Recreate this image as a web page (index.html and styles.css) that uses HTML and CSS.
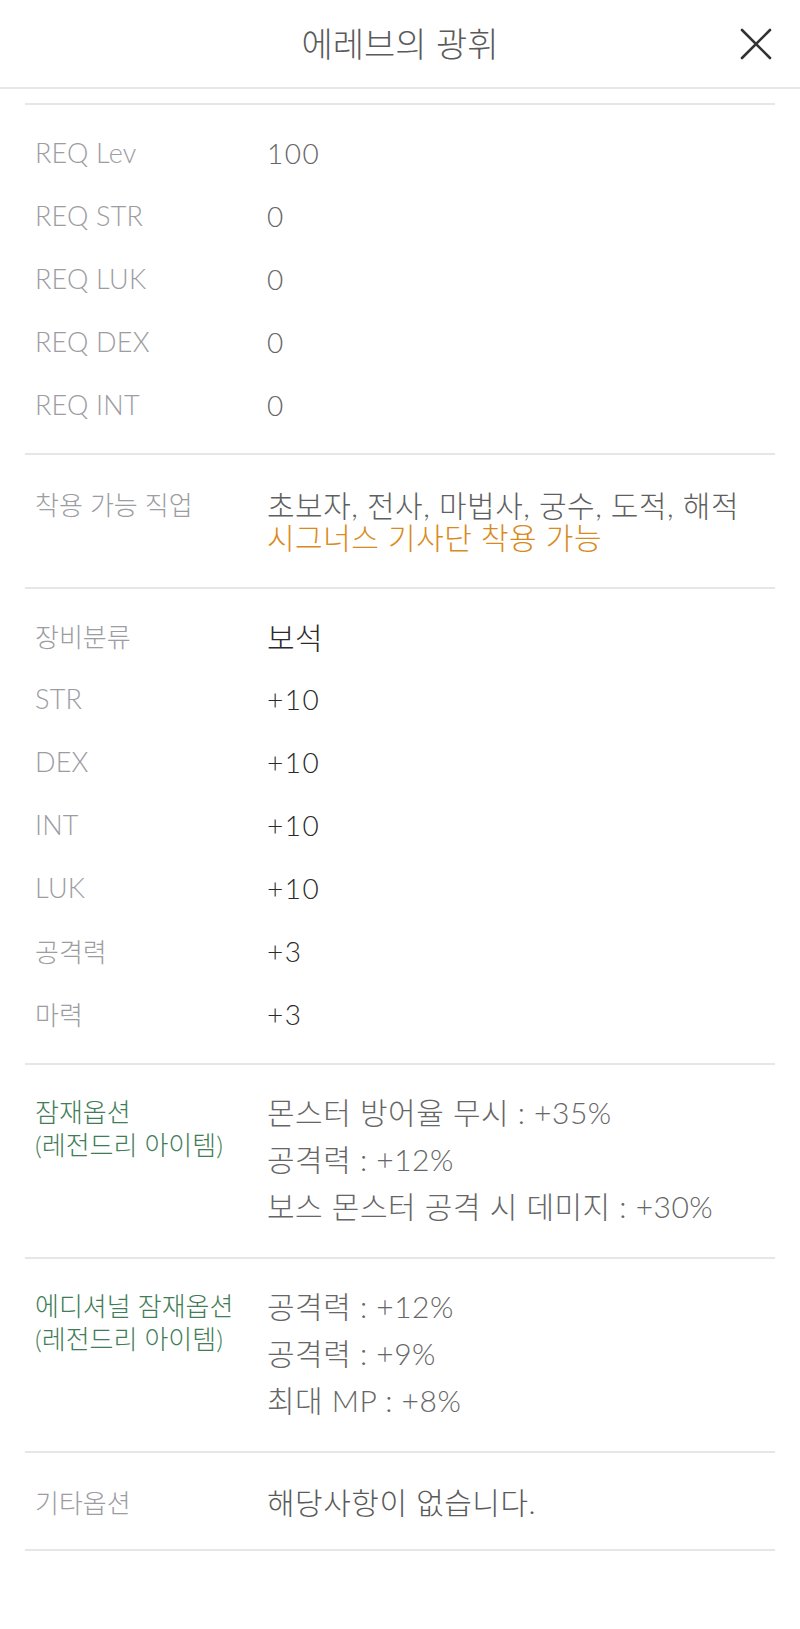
FILE: index.html
```html
<!DOCTYPE html>
<html lang="ko">
<head>
<meta charset="utf-8">
<title>에레브의 광휘</title>
<link rel="stylesheet" href="styles.css">
</head>
<body>
<header class="topbar">
  <span class="spacer"></span>
  <h1 class="title">에레브의 광휘</h1>
  <button class="close" aria-label="닫기">
    <svg width="32" height="32" viewBox="0 0 32 32"><path d="M2 2 L30 30 M30 2 L2 30" stroke="#333" stroke-width="2.6" fill="none" stroke-linecap="round"/></svg>
  </button>
</header>
<main class="content">
  <section class="group group-req">
    <div class="row"><span class="label lat">REQ Lev</span><span class="value lat">100</span></div>
    <div class="row"><span class="label lat">REQ STR</span><span class="value lat">0</span></div>
    <div class="row"><span class="label lat">REQ LUK</span><span class="value lat">0</span></div>
    <div class="row"><span class="label lat">REQ DEX</span><span class="value lat">0</span></div>
    <div class="row"><span class="label lat">REQ INT</span><span class="value lat">0</span></div>
  </section>
  <section class="group group-job">
    <div class="row row-multi">
      <span class="label">착용 가능 직업</span>
      <div class="value">
        <div>초보자, 전사, 마법사, 궁수, 도적, 해적</div>
        <div class="orange">시그너스 기사단 착용 가능</div>
      </div>
    </div>
  </section>
  <section class="group group-stat">
    <div class="row"><span class="label">장비분류</span><span class="value dark">보석</span></div>
    <div class="row"><span class="label lat">STR</span><span class="value dark lat">+10</span></div>
    <div class="row"><span class="label lat">DEX</span><span class="value dark lat">+10</span></div>
    <div class="row"><span class="label lat">INT</span><span class="value dark lat">+10</span></div>
    <div class="row"><span class="label lat">LUK</span><span class="value dark lat">+10</span></div>
    <div class="row"><span class="label">공격력</span><span class="value dark lat">+3</span></div>
    <div class="row"><span class="label">마력</span><span class="value dark lat">+3</span></div>
  </section>
  <section class="group group-pot">
    <div class="row row-pot">
      <div class="label green"><div>잠재옵션</div><div>(레전드리 아이템)</div></div>
      <div class="value">
        <div>몬스터 방어율 무시 : +35%</div>
        <div>공격력 : +12%</div>
        <div>보스 몬스터 공격 시 데미지 : +30%</div>
      </div>
    </div>
  </section>
  <section class="group group-pot">
    <div class="row row-pot">
      <div class="label green"><div>에디셔널 잠재옵션</div><div>(레전드리 아이템)</div></div>
      <div class="value">
        <div>공격력 : +12%</div>
        <div>공격력 : +9%</div>
        <div>최대 MP : +8%</div>
      </div>
    </div>
  </section>
  <section class="group group-etc">
    <div class="row row-etc"><span class="label">기타옵션</span><span class="value mid">해당사항이 없습니다.</span></div>
  </section>
</main>
</body>
</html>
```
FILE: styles.css
```css
html, body {
  margin: 0;
  padding: 0;
  background: #fff;
}
body {
  font-family: "Lato", "Noto Sans CJK KR", sans-serif;
  font-weight: 300;
  color: #666;
}
.topbar {
  height: 87px;
  border-bottom: 2px solid #e8e8e8;
  display: grid;
  grid-template-columns: 1fr auto 1fr;
  align-items: center;
}
.title {
  margin: 0;
  font-size: 34px;
  font-weight: 300;
  color: #5a5a5a;
  line-height: 40px;
}
.close {
  justify-self: end;
  margin-right: 28px;
  width: 32px;
  height: 32px;
  padding: 0;
  border: 0;
  background: none;
  display: flex;
}
.content {
  padding: 14px 25px 0;
}
.group {
  border-top: 2px solid #e6e6e6;
}
.group:last-child {
  border-bottom: 2px solid #e6e6e6;
}
.row {
  display: flex;
  align-items: center;
  height: 63px;
  padding-left: 10px;
}
.label {
  width: 232px;
  flex: none;
  font-size: 26px;
  color: #9c9ca2;
}
.label.lat {
  font-size: 27px;
  letter-spacing: 0.2px;
}
.value {
  font-size: 30px;
  letter-spacing: 0.5px;
  color: #666;
}
.value.lat {
  font-size: 28px;
  letter-spacing: 1.5px;
}
.value.dark {
  color: #2a2a2a;
}
.value.mid {
  color: #5a5a5a;
}
.group-req {
  padding: 16px 0 17px;
}
.group-job {
  padding: 34px 0;
}
.row-multi {
  height: auto;
  align-items: flex-start;
}
.row-multi .label {
  line-height: 32px;
}
.row-multi .value {
  line-height: 32px;
  color: #5f5f5f;
}
.orange {
  color: #d98a1c;
}
.group-stat {
  padding: 15px 0 18px;
}
.group-pot {
  padding: 24px 0 27px;
}
.row-pot {
  height: auto;
  align-items: flex-start;
}
.row-pot .label {
  line-height: 33px;
  padding-top: 7px;
}
.row-pot .value {
  line-height: 47px;
}
.green {
  color: #3f7d56;
}
.row-etc {
  height: 96px;
}
```
